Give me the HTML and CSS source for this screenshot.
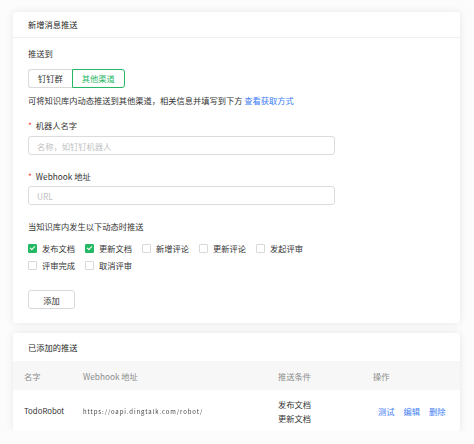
FILE: index.html
```html
<!DOCTYPE html>
<html lang="zh-CN">
<head>
    <meta charset="UTF-8">
    <title>消息推送</title>
    <link rel="stylesheet" href="styles.css">
</head>
<body>
    <!-- New push form -->
    <section class="card">
        <div class="card-head">新增消息推送</div>
        <div class="card-body">
            <div class="label">推送到</div>
            <div class="segmented">
                <span class="seg">钉钉群</span>
                <span class="seg active">其他渠道</span>
            </div>
            <p class="hint">可将知识库内动态推送到其他渠道，相关信息并填写到下方 <a class="link" href="#">查看获取方式</a></p>

            <div class="label field-label"><span class="req">*</span>机器人名字</div>
            <input class="input" type="text" placeholder="名称，如钉钉机器人">

            <div class="label field-label"><span class="req">*</span>Webhook 地址</div>
            <input class="input input-tight" type="text" placeholder="URL">

            <div class="label field-label">当知识库内发生以下动态时推送</div>
            <div class="checks">
                <label class="check"><span class="box on"></span>发布文档</label>
                <label class="check"><span class="box on"></span>更新文档</label>
                <label class="check"><span class="box"></span>新增评论</label>
                <label class="check"><span class="box"></span>更新评论</label>
                <label class="check"><span class="box"></span>发起评审</label>
                <label class="check"><span class="box"></span>评审完成</label>
                <label class="check"><span class="box"></span>取消评审</label>
            </div>

            <button class="button">添加</button>
        </div>
    </section>

    <!-- Existing pushes -->
    <section class="card card-list">
        <div class="list-head">已添加的推送</div>
        <table class="table">
            <colgroup>
                <col class="col-name">
                <col class="col-url">
                <col class="col-cond">
                <col>
            </colgroup>
            <thead>
                <tr>
                    <th>名字</th>
                    <th>Webhook 地址</th>
                    <th>推送条件</th>
                    <th>操作</th>
                </tr>
            </thead>
            <tbody>
                <tr>
                    <td class="name">TodoRobot</td>
                    <td><span class="masked">https://oapi.dingtalk.com/robot/</span></td>
                    <td class="cond">发布文档<br>更新文档</td>
                    <td class="ops"><a href="#">测试</a><a href="#">编辑</a><a href="#">删除</a></td>
                </tr>
            </tbody>
        </table>
    </section>
</body>
</html>
```

FILE: styles.css
```css
:root {
    --green: #25b864;
    --blue: #3d7cf5;
    --text: #333;
    --muted: #8c8c8c;
    --line: #f0f0f0;
}

* {
    margin: 0;
    padding: 0;
    box-sizing: border-box;
}

body {
    font-family: "Noto Sans CJK SC", "Liberation Sans", sans-serif;
    font-size: 8.25px;
    line-height: 12px;
    color: var(--text);
    background: #fcfcfc;
    padding: 12px 14px 0 13px;
}

/* Cards */
.card {
    background: #fff;
    border-radius: 3px;
    box-shadow: 0 0 8px rgba(0, 0, 0, 0.09);
}

.card-head {
    height: 26px;
    line-height: 25px;
    padding: 0 15px;
    border-bottom: 1px solid var(--line);
    color: #1f1f1f;
}

.card-body {
    padding: 9px 15px 14px;
}

.field-label {
    margin-top: 13px;
}

.req {
    color: #f5534f;
    margin-right: 4px;
}

/* Segmented switch */
.segmented {
    display: flex;
    margin-top: 10px;
}

.seg {
    height: 19px;
    line-height: 17px;
    padding: 0 9px;
    border: 1px solid #d9d9d9;
}

.seg:first-child {
    border-radius: 3px 0 0 3px;
    border-right: none;
}

.seg.active {
    border-color: var(--green);
    color: var(--green);
    border-radius: 0 3px 3px 0;
}

.hint {
    margin-top: 6px;
}

.link {
    color: var(--blue);
    text-decoration: none;
}

/* Inputs */
.input {
    display: block;
    width: 307px;
    height: 19px;
    margin-top: 5px;
    padding: 0 8px;
    border: 1px solid #dcdcdc;
    border-radius: 3px;
    font: inherit;
    outline: none;
}

.input-tight {
    margin-top: 4px;
}

.input::placeholder {
    color: #bfbfbf;
}

.input + .field-label {
    margin-top: 15px;
}

/* Checkboxes */
.checks {
    display: flex;
    flex-wrap: wrap;
    width: 290px;
    row-gap: 5px;
    margin-top: 10px;
}

.check {
    display: flex;
    align-items: center;
    width: 57px;
}

.box {
    width: 9px;
    height: 9px;
    margin-right: 5px;
    border: 1px solid #d9d9d9;
    border-radius: 1px;
    position: relative;
}

.box.on {
    background: var(--green);
    border-color: var(--green);
}

.box.on::after {
    content: '';
    position: absolute;
    left: 2px;
    top: 0;
    width: 2px;
    height: 4px;
    border: solid #fff;
    border-width: 0 1.2px 1.2px 0;
    transform: rotate(45deg);
}

.button {
    display: block;
    width: 47px;
    height: 19px;
    margin-top: 19px;
    background: #fff;
    border: 1px solid #d9d9d9;
    border-radius: 3px;
    font: inherit;
    color: var(--text);
}

/* Added list */
.card-list {
    margin-top: 10px;
    overflow: hidden;
}

.list-head {
    height: 28px;
    line-height: 28px;
    padding: 0 15px;
    color: #1f1f1f;
}

.table {
    width: 100%;
    table-layout: fixed;
    border-collapse: collapse;
    text-align: left;
}

.col-name { width: 59px; }
.col-url { width: 195px; }
.col-cond { width: 95px; }

.table th {
    height: 29px;
    padding: 0 0 0 11px;
    background: #f7f7f7;
    font-weight: normal;
    color: var(--muted);
    white-space: nowrap;
}

.table td {
    height: 41px;
    padding: 0 0 0 11px;
    line-height: 14px;
    white-space: nowrap;
}

.table td.name {
    font-size: 7.8px;
}

.masked {
    font-size: 6px;
    letter-spacing: 0.9px;
    color: #444;
    filter: blur(0.4px);
}

.table td.ops {
    padding-left: 16px;
}

.ops a {
    color: var(--blue);
    text-decoration: none;
    margin-right: 9px;
}
```
